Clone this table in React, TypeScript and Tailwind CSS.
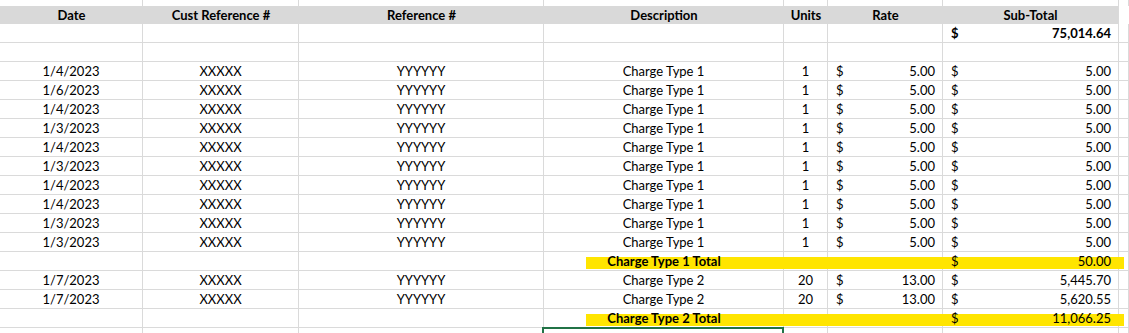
import React from 'react';

// Column widths include the 1px right gridline of each cell
const GRID = 'grid grid-cols-[143px_156px_245px_240px_44px_115px_176px_1fr]';
const LINE = 'border-[#dadada]';

const COL_START = ['col-start-1', 'col-start-2', 'col-start-3', 'col-start-4', 'col-start-5', 'col-start-6', 'col-start-7', 'col-start-8'];

interface LineItem {
    date: string;
    cust: string;
    ref: string;
    desc: string;
    units: string;
    rate: string;
    total: string;
}

const type1Dates = ['1/4/2023', '1/6/2023', '1/4/2023', '1/3/2023', '1/4/2023', '1/3/2023', '1/4/2023', '1/4/2023', '1/3/2023', '1/3/2023'];

const type1: LineItem[] = type1Dates.map((date) => ({
    date,
    cust: 'XXXXX',
    ref: 'YYYYYY',
    desc: 'Charge Type 1',
    units: '1',
    rate: '5.00',
    total: '5.00',
}));

const type2: LineItem[] = [
    { date: '1/7/2023', cust: 'XXXXX', ref: 'YYYYYY', desc: 'Charge Type 2', units: '20', rate: '13.00', total: '5,445.70' },
    { date: '1/7/2023', cust: 'XXXXX', ref: 'YYYYYY', desc: 'Charge Type 2', units: '20', rate: '13.00', total: '5,620.55' },
];

const Cell: React.FC<{ col: number; className?: string; children?: React.ReactNode }> = ({ col, className = '', children }) => (
    <div className={`${COL_START[col]} row-start-1 flex items-center border-b border-r ${LINE} overflow-visible whitespace-nowrap ${className}`}>
        {children}
    </div>
);

const Money: React.FC<{ value: string; bold?: boolean }> = ({ value, bold }) => (
    <div className={`flex w-full justify-between pl-[8px] pr-[7px] ${bold ? 'font-bold' : ''}`}>
        <span>$</span>
        <span>{value}</span>
    </div>
);

const DataRow: React.FC<{ item: LineItem }> = ({ item }) => (
    <div className={`${GRID} h-[19px]`}>
        <Cell col={0} className="justify-center">{item.date}</Cell>
        <Cell col={1} className="justify-center">{item.cust}</Cell>
        <Cell col={2} className="justify-center">{item.ref}</Cell>
        <Cell col={3} className="justify-center">{item.desc}</Cell>
        <Cell col={4} className="justify-center">{item.units}</Cell>
        <Cell col={5}><Money value={item.rate} /></Cell>
        <Cell col={6}><Money value={item.total} /></Cell>
        <Cell col={7} />
    </div>
);

const EmptyRow: React.FC<{ selectedCol?: number }> = ({ selectedCol }) => (
    <div className={`${GRID} h-[19px]`}>
        {COL_START.map((_, i) => (
            <Cell key={i} col={i} className="relative">
                {selectedCol === i && (
                    <div className="absolute -left-[2px] -top-[1px] h-[22px] w-[242px] border-2 border-[#217346]" />
                )}
            </Cell>
        ))}
    </div>
);

const TotalRow: React.FC<{ label: string; value: string }> = ({ label, value }) => (
    <div className={`${GRID} h-[19px]`}>
        {COL_START.map((_, i) => <Cell key={i} col={i} />)}
        {/* highlight band sits over the gridlines, text goes on top */}
        <div className="col-start-4 col-end-9 row-start-1 ml-[42px] mr-[5px] mt-[5px] h-[12px] self-start bg-[#ffe500]" />
        <div className="col-start-4 row-start-1 flex items-center justify-center whitespace-nowrap pb-px font-bold">{label}</div>
        <div className="col-start-7 row-start-1 flex items-center pb-px pr-px"><Money value={value} /></div>
    </div>
);

export default function App() {
    return (
        <div className="h-[333px] w-[1129px] overflow-hidden bg-white font-[Lato,sans-serif] text-[13px] leading-none text-black">
            {/* partially visible row above the header */}
            <div className={`${GRID} h-[6px]`}>
                {COL_START.map((_, i) => <div key={i} className={`${COL_START[i]} border-r ${LINE}`} />)}
            </div>

            <div className={`${GRID} h-[18px] font-bold`}>
                <div className="flex items-center justify-center bg-[#d9d9d9]">Date</div>
                <div className="flex items-center justify-center bg-[#d9d9d9]">Cust Reference #</div>
                <div className="flex items-center justify-center bg-[#d9d9d9]">Reference #</div>
                <div className="flex items-center justify-center bg-[#d9d9d9]">Description</div>
                <div className="flex items-center justify-center bg-[#d9d9d9]">Units</div>
                <div className="flex items-center justify-center bg-[#d9d9d9]">Rate</div>
                <div className={`flex items-center justify-center border-r bg-[#d9d9d9] ${LINE}`}>Sub-Total</div>
                <div />
            </div>

            <div className={`${GRID} h-[19px]`}>
                {COL_START.slice(0, 6).map((_, i) => <Cell key={i} col={i} />)}
                <Cell col={6}><Money value="75,014.64" bold /></Cell>
                <Cell col={7} />
            </div>

            <EmptyRow />

            {type1.map((item, i) => <DataRow key={i} item={item} />)}
            <TotalRow label="Charge Type 1 Total" value="50.00" />

            {type2.map((item, i) => <DataRow key={i} item={item} />)}
            <TotalRow label="Charge Type 2 Total" value="11,066.25" />

            {/* next row is cut off by the window; only the active cell outline shows */}
            <EmptyRow selectedCol={3} />
        </div>
    );
}
